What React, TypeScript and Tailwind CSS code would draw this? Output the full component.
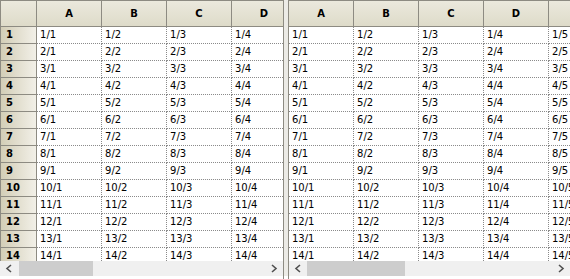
import React from 'react'

const ROWS = Array.from({ length: 14 }, (_, i) => i + 1)

function Chevron({ dir }: { dir: 'left' | 'right' }) {
  return (
    <svg width="8" height="9" viewBox="0 0 8 9" className="shrink-0">
      {dir === 'left' ? (
        <polyline points="6,1 2,4.5 6,8" fill="none" stroke="#505050" strokeWidth="1.6" />
      ) : (
        <polyline points="2,1 6,4.5 2,8" fill="none" stroke="#505050" strokeWidth="1.6" />
      )}
    </svg>
  )
}

function ScrollBar({ thumbLeft, thumbWidth }: { thumbLeft: number; thumbWidth: number }) {
  return (
    <div className="relative flex h-[15px] items-center justify-between bg-[#f0f0f0] px-[5px]">
      <Chevron dir="left" />
      <div
        className="absolute top-0 h-[15px] bg-[#cdcdcd]"
        style={{ left: thumbLeft, width: thumbWidth }}
      />
      <Chevron dir="right" />
    </div>
  )
}

function Sheet({ cols, rowHeader }: { cols: string[]; rowHeader: boolean }) {
  return (
    <div className="h-[261px] overflow-hidden">
      <div className="flex h-[27px] w-max border-t border-b border-[#8d8b82]">
        {rowHeader && (
          <div className="w-[37px] shrink-0 border-l border-r border-[#8d8b82] bg-gradient-to-b from-[#ebe9dd] to-[#dedbc9]" />
        )}
        {cols.map((c) => (
          <div
            key={c}
            className="flex w-[65px] shrink-0 items-center justify-center border-r border-[#8d8b82] bg-gradient-to-b from-[#ebe9dd] to-[#dedbc9] font-bold"
          >
            {c}
          </div>
        ))}
      </div>
      {ROWS.map((r) => (
        <div key={r} className="flex h-[17px] w-max">
          {rowHeader && (
            <div className="w-[37px] shrink-0 border-l border-r border-b border-[#8d8b82] bg-gradient-to-r from-[#d3ceb7] to-[#f2f0e8] pl-[5px] font-bold leading-[16px]">
              {r}
            </div>
          )}
          {cols.map((c, i) => (
            <div
              key={c}
              className="w-[65px] shrink-0 border-r border-b border-dotted border-[#8a8a8a] pl-[3px] leading-[16px]"
            >
              {r}/{i + 1}
            </div>
          ))}
        </div>
      ))}
    </div>
  )
}

export default function App() {
  return (
    <div className="flex h-[279px] w-[570px] overflow-hidden bg-white font-['DejaVu_Sans',sans-serif] text-[10px] text-black">
      <div className="flex w-[284px] shrink-0 flex-col overflow-hidden border-r border-[#8d8b82]">
        <Sheet cols={['A', 'B', 'C', 'D']} rowHeader />
        <ScrollBar thumbLeft={19} thumbWidth={74} />
      </div>
      <div className="h-[276px] w-[4px] shrink-0 bg-[#ecebe6]" />
      <div className="flex min-w-0 flex-1 flex-col overflow-hidden border-l border-[#8d8b82]">
        <Sheet cols={['A', 'B', 'C', 'D', 'E']} rowHeader={false} />
        <ScrollBar thumbLeft={18} thumbWidth={98} />
      </div>
    </div>
  )
}
